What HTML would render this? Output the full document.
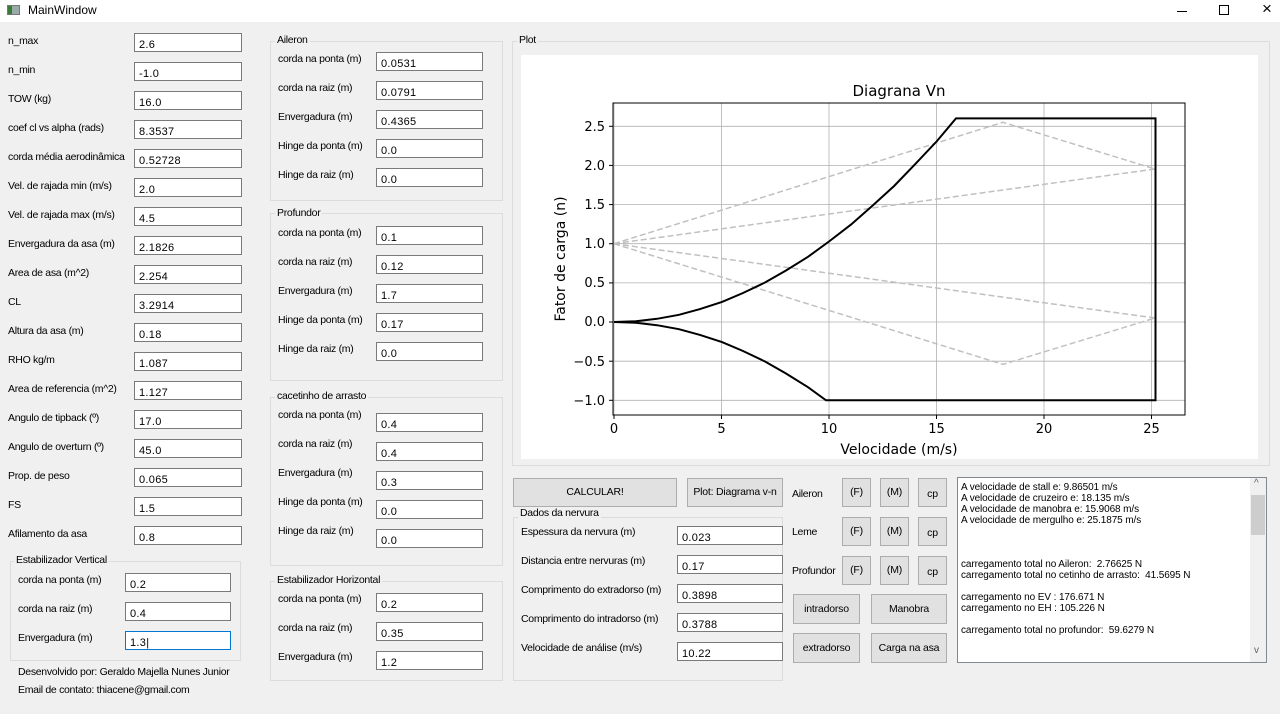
<!DOCTYPE html>
<html><head><meta charset="utf-8"><style>
*{box-sizing:border-box;margin:0;padding:0}
body{width:1280px;height:714px;background:#f0f0f0;position:relative;overflow:hidden;font-family:"Liberation Sans",sans-serif;font-size:11px;color:#000}
div,span{position:absolute}
.tb{left:0;top:0;width:1280px;height:22px;background:#fff}
.l{white-space:nowrap;font-size:10.5px;letter-spacing:-0.3px}
.i{background:#fff;border:1px solid #7a7a7a;height:19px;font-size:11px;padding:5px 0 0 4px;letter-spacing:0.3px;white-space:nowrap}
.g{border:1px solid #dcdcdc;}
.gt{background:#f0f0f0;padding:0 2px;white-space:nowrap;font-size:10.5px;letter-spacing:-0.3px}
.b{background:#e1e1e1;border:1px solid #adadad;text-align:center;font-size:10.5px;letter-spacing:-0.2px;white-space:nowrap}
</style></head><body>
<div class="tb"></div>
<div style="left:7px;top:5px;width:13px;height:10px;background:#9aa;border:1px solid #777"><span style="left:0;top:0;width:4px;height:8px;background:#3a7a3a"></span></div>
<div style="left:28px;top:3px;font-size:12px">MainWindow</div>
<div style="left:1177px;top:11px;width:10px;height:1px;background:#000"></div>
<div style="left:1219px;top:5px;width:10px;height:10px;border:1px solid #000"></div>
<div style="left:1262px;top:-1px;font-size:17px;font-weight:300">×</div>

<!-- left column -->
<div class="l" style="left:8px;top:35px">n_max</div><div class="i" style="left:134px;top:33px;width:108px">2.6</div>
<div class="l" style="left:8px;top:64px">n_min</div><div class="i" style="left:134px;top:62px;width:108px">-1.0</div>
<div class="l" style="left:8px;top:93px">TOW (kg)</div><div class="i" style="left:134px;top:91px;width:108px">16.0</div>
<div class="l" style="left:8px;top:122px">coef cl vs alpha (rads)</div><div class="i" style="left:134px;top:120px;width:108px">8.3537</div>
<div class="l" style="left:8px;top:151px">corda média aerodinâmica</div><div class="i" style="left:134px;top:149px;width:108px">0.52728</div>
<div class="l" style="left:8px;top:180px">Vel. de rajada min (m/s)</div><div class="i" style="left:134px;top:178px;width:108px">2.0</div>
<div class="l" style="left:8px;top:209px">Vel. de rajada max (m/s)</div><div class="i" style="left:134px;top:207px;width:108px">4.5</div>
<div class="l" style="left:8px;top:238px">Envergadura da asa (m)</div><div class="i" style="left:134px;top:236px;width:108px">2.1826</div>
<div class="l" style="left:8px;top:267px">Area de asa (m^2)</div><div class="i" style="left:134px;top:265px;width:108px">2.254</div>
<div class="l" style="left:8px;top:296px">CL</div><div class="i" style="left:134px;top:294px;width:108px">3.2914</div>
<div class="l" style="left:8px;top:325px">Altura da asa (m)</div><div class="i" style="left:134px;top:323px;width:108px">0.18</div>
<div class="l" style="left:8px;top:354px">RHO kg/m</div><div class="i" style="left:134px;top:352px;width:108px">1.087</div>
<div class="l" style="left:8px;top:383px">Area de referencia (m^2)</div><div class="i" style="left:134px;top:381px;width:108px">1.127</div>
<div class="l" style="left:8px;top:412px">Angulo de tipback (º)</div><div class="i" style="left:134px;top:410px;width:108px">17.0</div>
<div class="l" style="left:8px;top:441px">Angulo de overturn (º)</div><div class="i" style="left:134px;top:439px;width:108px">45.0</div>
<div class="l" style="left:8px;top:470px">Prop. de peso</div><div class="i" style="left:134px;top:468px;width:108px">0.065</div>
<div class="l" style="left:8px;top:499px">FS</div><div class="i" style="left:134px;top:497px;width:108px">1.5</div>
<div class="l" style="left:8px;top:528px">Afilamento da asa</div><div class="i" style="left:134px;top:526px;width:108px">0.8</div>

<div class="g" style="left:10px;top:561px;width:231px;height:100px"></div>
<div class="gt" style="left:14px;top:554px">Estabilizador Vertical</div>
<div class="l" style="left:18px;top:574px">corda na ponta (m)</div><div class="i" style="left:125px;top:573px;width:106px">0.2</div>
<div class="l" style="left:18px;top:603px">corda na raiz (m)</div><div class="i" style="left:125px;top:602px;width:106px">0.4</div>
<div class="l" style="left:18px;top:632px">Envergadura (m)</div><div class="i" style="left:125px;top:631px;width:106px;border-color:#0078d7">1.3|</div>
<div class="l" style="left:18px;top:666px">Desenvolvido por: Geraldo Majella Nunes Junior</div>
<div class="l" style="left:18px;top:684px">Email de contato: thiacene@gmail.com</div>

<!-- middle column -->
<div class="g" style="left:270px;top:41px;width:233px;height:160px"></div>
<div class="gt" style="left:275px;top:34px">Aileron</div>
<div class="l" style="left:278px;top:53px">corda na ponta (m)</div><div class="i" style="left:376px;top:52px;width:107px">0.0531</div>
<div class="l" style="left:278px;top:82px">corda na raiz (m)</div><div class="i" style="left:376px;top:81px;width:107px">0.0791</div>
<div class="l" style="left:278px;top:111px">Envergadura (m)</div><div class="i" style="left:376px;top:110px;width:107px">0.4365</div>
<div class="l" style="left:278px;top:140px">Hinge da ponta (m)</div><div class="i" style="left:376px;top:139px;width:107px">0.0</div>
<div class="l" style="left:278px;top:169px">Hinge da raiz (m)</div><div class="i" style="left:376px;top:168px;width:107px">0.0</div>

<div class="g" style="left:270px;top:213px;width:233px;height:168px"></div>
<div class="gt" style="left:275px;top:207px">Profundor</div>
<div class="l" style="left:278px;top:227px">corda na ponta (m)</div><div class="i" style="left:376px;top:226px;width:107px">0.1</div>
<div class="l" style="left:278px;top:256px">corda na raiz (m)</div><div class="i" style="left:376px;top:255px;width:107px">0.12</div>
<div class="l" style="left:278px;top:285px">Envergadura (m)</div><div class="i" style="left:376px;top:284px;width:107px">1.7</div>
<div class="l" style="left:278px;top:314px">Hinge da ponta (m)</div><div class="i" style="left:376px;top:313px;width:107px">0.17</div>
<div class="l" style="left:278px;top:343px">Hinge da raiz (m)</div><div class="i" style="left:376px;top:342px;width:107px">0.0</div>

<div class="g" style="left:270px;top:397px;width:233px;height:169px"></div>
<div class="gt" style="left:275px;top:390px">cacetinho de arrasto</div>
<div class="l" style="left:278px;top:409px">corda na ponta (m)</div><div class="i" style="left:376px;top:413px;width:107px">0.4</div>
<div class="l" style="left:278px;top:438px">corda na raiz (m)</div><div class="i" style="left:376px;top:442px;width:107px">0.4</div>
<div class="l" style="left:278px;top:467px">Envergadura (m)</div><div class="i" style="left:376px;top:471px;width:107px">0.3</div>
<div class="l" style="left:278px;top:496px">Hinge da ponta (m)</div><div class="i" style="left:376px;top:500px;width:107px">0.0</div>
<div class="l" style="left:278px;top:525px">Hinge da raiz (m)</div><div class="i" style="left:376px;top:529px;width:107px">0.0</div>

<div class="g" style="left:270px;top:581px;width:233px;height:100px"></div>
<div class="gt" style="left:275px;top:574px">Estabilizador Horizontal</div>
<div class="l" style="left:278px;top:593px">corda na ponta (m)</div><div class="i" style="left:376px;top:593px;width:107px">0.2</div>
<div class="l" style="left:278px;top:622px">corda na raiz (m)</div><div class="i" style="left:376px;top:622px;width:107px">0.35</div>
<div class="l" style="left:278px;top:651px">Envergadura (m)</div><div class="i" style="left:376px;top:651px;width:107px">1.2</div>

<!-- plot -->
<div class="g" style="left:512px;top:41px;width:758px;height:425px"></div>
<div class="gt" style="left:517px;top:34px">Plot</div>
<svg style="position:absolute;left:521px;top:55px" width="737" height="404" viewBox="521 55 737 404" font-family="DejaVu Sans, sans-serif">
<rect x="521" y="55" width="737" height="404" fill="#fff"/>
<g stroke="#b0b0b0" stroke-width="0.8">
<line x1="614" y1="103" x2="614" y2="415"/><line x1="721.5" y1="103" x2="721.5" y2="415"/><line x1="829" y1="103" x2="829" y2="415"/><line x1="936.5" y1="103" x2="936.5" y2="415"/><line x1="1044" y1="103" x2="1044" y2="415"/><line x1="1151.5" y1="103" x2="1151.5" y2="415"/>
<line x1="613" y1="126.3" x2="1185" y2="126.3"/><line x1="613" y1="165.4" x2="1185" y2="165.4"/><line x1="613" y1="204.6" x2="1185" y2="204.6"/><line x1="613" y1="243.7" x2="1185" y2="243.7"/><line x1="613" y1="282.9" x2="1185" y2="282.9"/><line x1="613" y1="322" x2="1185" y2="322"/><line x1="613" y1="361.2" x2="1185" y2="361.2"/><line x1="613" y1="400.3" x2="1185" y2="400.3"/>
</g>
<g fill="none" stroke="#c0c0c0" stroke-width="1.5" stroke-dasharray="6,3">
<polyline points="614,243.7 1003,122.3 1155,169"/>
<polyline points="614,243.7 1155,169"/>
<polyline points="614,243.7 1155,318"/>
<polyline points="614,243.7 1003,364.4 1155,318"/>
</g>
<polyline fill="none" stroke="#000" stroke-width="2" points="614,322 636,321.2 657,318.8 679,314.8 700,309.1 722,301.9 743,293 765,282.5 786,270.5 808,256.8 829,241.5 851,224.6 872,206.1 894,186.1 915,164.3 937,141 956,118.4 1155.5,118.4 1155.5,400.3 826,400.3 808,387.2 786,373.5 765,361.5 743,351 722,342.1 700,334.9 679,329.2 657,325.2 636,322.8 614,322"/>
<rect x="613" y="103" width="572" height="312" fill="none" stroke="#000" stroke-width="1"/>
<g stroke="#000"><line x1="614" y1="415" x2="614" y2="419"/><line x1="721.5" y1="415" x2="721.5" y2="419"/><line x1="829" y1="415" x2="829" y2="419"/><line x1="936.5" y1="415" x2="936.5" y2="419"/><line x1="1044" y1="415" x2="1044" y2="419"/><line x1="1151.5" y1="415" x2="1151.5" y2="419"/>
<line x1="609" y1="126.3" x2="613" y2="126.3"/><line x1="609" y1="165.4" x2="613" y2="165.4"/><line x1="609" y1="204.6" x2="613" y2="204.6"/><line x1="609" y1="243.7" x2="613" y2="243.7"/><line x1="609" y1="282.9" x2="613" y2="282.9"/><line x1="609" y1="322" x2="613" y2="322"/><line x1="609" y1="361.2" x2="613" y2="361.2"/><line x1="609" y1="400.3" x2="613" y2="400.3"/></g>
<g font-size="13" text-anchor="middle"><text x="614" y="433">0</text><text x="721.5" y="433">5</text><text x="829" y="433">10</text><text x="936.5" y="433">15</text><text x="1044" y="433">20</text><text x="1151.5" y="433">25</text></g>
<g font-size="13" text-anchor="end"><text x="605" y="131">2.5</text><text x="605" y="170">2.0</text><text x="605" y="209">1.5</text><text x="605" y="248">1.0</text><text x="605" y="287">0.5</text><text x="605" y="326">0.0</text><text x="605" y="366">−0.5</text><text x="605" y="405">−1.0</text></g>
<text x="899" y="96" font-size="15" text-anchor="middle">Diagrana Vn</text>
<text x="899" y="454" font-size="14" text-anchor="middle">Velocidade (m/s)</text>
<text x="0" y="0" font-size="14" text-anchor="middle" transform="translate(565,259) rotate(-90)">Fator de carga (n)</text>
</svg>

<!-- bottom controls -->
<div class="b" style="left:513px;top:478px;width:164px;height:29px;padding-top:7px">CALCULAR!</div>
<div class="b" style="left:687px;top:478px;width:96px;height:29px;padding-top:7px">Plot: Diagrama v-n</div>
<div class="g" style="left:513px;top:517px;width:270px;height:164px"></div>
<div class="gt" style="left:518px;top:507px">Dados da nervura</div>
<div class="l" style="left:521px;top:526px">Espessura da nervura (m)</div><div class="i" style="left:677px;top:526px;width:106px">0.023</div>
<div class="l" style="left:521px;top:555px">Distancia entre nervuras (m)</div><div class="i" style="left:677px;top:555px;width:106px">0.17</div>
<div class="l" style="left:521px;top:584px">Comprimento do extradorso (m)</div><div class="i" style="left:677px;top:584px;width:106px">0.3898</div>
<div class="l" style="left:521px;top:613px">Comprimento do intradorso (m)</div><div class="i" style="left:677px;top:613px;width:106px">0.3788</div>
<div class="l" style="left:521px;top:642px">Velocidade de análise (m/s)</div><div class="i" style="left:677px;top:642px;width:106px">10.22</div>

<div class="l" style="left:792px;top:488px">Aileron</div>
<div class="b" style="left:842px;top:478px;width:29px;height:29px;padding-top:7px">(F)</div>
<div class="b" style="left:880px;top:478px;width:29px;height:29px;padding-top:7px">(M)</div>
<div class="b" style="left:918px;top:478px;width:29px;height:29px;padding-top:9px">cp</div>
<div class="l" style="left:792px;top:526px">Leme</div>
<div class="b" style="left:842px;top:517px;width:29px;height:29px;padding-top:7px">(F)</div>
<div class="b" style="left:880px;top:517px;width:29px;height:29px;padding-top:7px">(M)</div>
<div class="b" style="left:918px;top:517px;width:29px;height:29px;padding-top:9px">cp</div>
<div class="l" style="left:792px;top:565px">Profundor</div>
<div class="b" style="left:842px;top:556px;width:29px;height:29px;padding-top:7px">(F)</div>
<div class="b" style="left:880px;top:556px;width:29px;height:29px;padding-top:7px">(M)</div>
<div class="b" style="left:918px;top:556px;width:29px;height:29px;padding-top:9px">cp</div>
<div class="b" style="left:793px;top:594px;width:67px;height:30px;padding-top:8px">intradorso</div>
<div class="b" style="left:871px;top:594px;width:76px;height:30px;padding-top:8px">Manobra</div>
<div class="b" style="left:793px;top:633px;width:67px;height:30px;padding-top:8px">extradorso</div>
<div class="b" style="left:871px;top:633px;width:76px;height:30px;padding-top:8px">Carga na asa</div>

<div style="left:957px;top:477px;width:310px;height:186px;background:#fff;border:1px solid #828790"></div>
<div style="left:1250px;top:478px;width:16px;height:184px;background:#f0f0f0"></div>
<div style="left:1251px;top:495px;width:14px;height:40px;background:#cdcdcd"></div>
<div style="left:1254px;top:478px;font-size:10px;color:#606060">^</div>
<div style="left:1254px;top:645px;font-size:10px;color:#606060">v</div>
<div style="left:961px;top:482px;font-size:10px;line-height:11px;white-space:pre;letter-spacing:-0.1px">A velocidade de stall e: 9.86501 m/s
A velocidade de cruzeiro e: 18.135 m/s
A velocidade de manobra e: 15.9068 m/s
A velocidade de mergulho e: 25.1875 m/s



carregamento total no Aileron:  2.76625 N
carregamento total no cetinho de arrasto:  41.5695 N

carregamento no EV : 176.671 N
carregamento no EH : 105.226 N

carregamento total no profundor:  59.6279 N</div>
</body></html>
